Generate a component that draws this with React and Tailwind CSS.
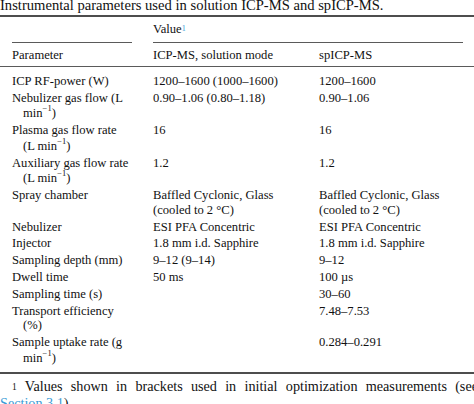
import React from "react";

const Min = () => (
  <>
    min<sup className="text-[8.5px] relative top-[-1px] align-super leading-none">−1</sup>)
  </>
);
const LMin = () => (
  <>
    (L min<sup className="text-[8.5px] relative top-[-1px] align-super leading-none">−1</sup>)
  </>
);

const rows = [
  { p: ["ICP RF-power (W)"], a: ["1200–1600 (1000–1600)"], b: ["1200–1600"] },
  { p: ["Nebulizer gas flow (L", <Min key="m" />], a: ["0.90–1.06 (0.80–1.18)"], b: ["0.90–1.06"] },
  { p: ["Plasma gas flow rate", <LMin key="l" />], a: ["16"], b: ["16"] },
  { p: ["Auxiliary gas flow rate", <LMin key="l" />], a: ["1.2"], b: ["1.2"] },
  {
    p: ["Spray chamber"],
    a: ["Baffled Cyclonic, Glass", "(cooled to 2 °C)"],
    b: ["Baffled Cyclonic, Glass", "(cooled to 2 °C)"],
  },
  { p: ["Nebulizer"], a: ["ESI PFA Concentric"], b: ["ESI PFA Concentric"] },
  { p: ["Injector"], a: ["1.8 mm i.d. Sapphire"], b: ["1.8 mm i.d. Sapphire"] },
  { p: ["Sampling depth (mm)"], a: ["9–12 (9–14)"], b: ["9–12"] },
  { p: ["Dwell time"], a: ["50 ms"], b: ["100 µs"] },
  { p: ["Sampling time (s)"], a: [""], b: ["30–60"] },
  { p: ["Transport efficiency", "(%)"], a: [""], b: ["7.48–7.53"] },
  { p: ["Sample uptake rate (g", <Min key="m" />], a: [""], b: ["0.284–0.291"] },
];

function Cell({ lines, indent }) {
  return (
    <div className="flex flex-col">
      {lines.map((l, i) => (
        <div key={i} className={indent && i > 0 ? "pl-[11px] whitespace-nowrap" : "whitespace-nowrap"}>
          {l === "" ? "\u00a0" : l}
        </div>
      ))}
    </div>
  );
}

export default function App() {
  return (
    <div
      className="w-[474px] h-[404px] overflow-hidden bg-white text-[#111111]"
      style={{ fontFamily: '"Liberation Serif", "DejaVu Serif", serif' }}
    >
      <div className="text-[14.6px] leading-[16px] mt-[-3px] whitespace-nowrap">
        Instrumental parameters used in solution ICP-MS and spICP-MS.
      </div>
      <div className="mt-[2px] border-t-2 border-[#4d4d4d]" />

      <div className="text-[12.6px] leading-[14.6px]">
        <div className="grid grid-cols-[153px_166px_1fr] pt-[5px]">
          <div />
          <div className="col-span-2">
            Value<sup className="text-[8px] text-[#3b9bd6] relative top-[-2px] leading-none">1</sup>
          </div>
        </div>
        <div className="grid grid-cols-[153px_1fr] mt-[5px]">
          <div className="pl-[12px] pr-[21px]">
            <div className="border-t-[1.5px] border-[#5a5a5a]" />
          </div>
          <div className="pr-[11px]">
            <div className="border-t-[1.5px] border-[#5a5a5a]" />
          </div>
        </div>
        <div className="grid grid-cols-[153px_166px_1fr] pt-[5.5px] pb-[3.5px]">
          <div className="pl-[12px]">Parameter</div>
          <div>ICP-MS, solution mode</div>
          <div>spICP-MS</div>
        </div>
        <div className="border-t-[1.5px] border-[#5a5a5a]" />

        <div className="pt-[5.5px]">
          {rows.map((r, i) => (
            <div key={i} className="grid grid-cols-[153px_166px_1fr] py-[1.1px]">
              <div className="pl-[12px]">
                <Cell lines={r.p} indent />
              </div>
              <Cell lines={r.a} />
              <Cell lines={r.b} />
            </div>
          ))}
        </div>
        <div className="mt-[6px] border-t-2 border-[#4d4d4d]" />
      </div>

      <div className="text-[14.2px] leading-[16.5px] pt-[4px]">
        <div className="w-[478px] pl-[12px] whitespace-nowrap text-justify [text-align-last:justify]">
          <sup className="text-[9.5px] relative top-[-1px] leading-none">1</sup> Values shown in brackets used in initial optimization measurements (see
        </div>
        <div>
          <span className="text-[#3b9bd6]">Section 3.1</span>).
        </div>
      </div>
    </div>
  );
}
